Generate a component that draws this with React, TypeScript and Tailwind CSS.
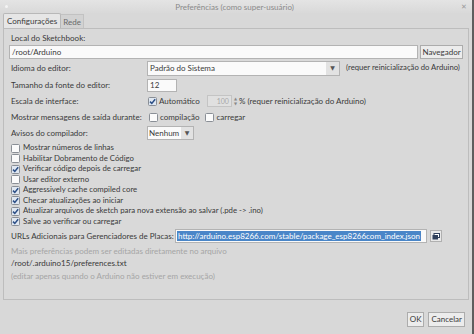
import React from 'react'

const Box = ({ checked }: { checked?: boolean }) => (
  <svg width="9" height="9" viewBox="0 0 9 9" className="shrink-0">
    <rect x="0.5" y="0.5" width="8" height="8" rx="1" fill={checked ? '#dfe7f1' : '#fbfbfb'} stroke="#8a8f96" />
    {checked && <path d="M2 4.6 L3.8 6.4 L7.2 2.2" fill="none" stroke="#2c4f86" strokeWidth="1.5" />}
  </svg>
)

const Row = ({ children, h, cls = '' }: { children: React.ReactNode; h: string; cls?: string }) => (
  <div className={`flex items-center whitespace-nowrap ${h} ${cls}`}>{children}</div>
)

const checks: [string, boolean][] = [
  ['Mostrar números de linhas', false],
  ['Habilitar Dobramento de Código', false],
  ['Verificar código depois de carregar', true],
  ['Usar editor externo', false],
  ['Aggressively cache compiled core', true],
  ['Checar atualizações ao iniciar', true],
  ['Atualizar arquivos de sketch para nova extensão ao salvar (.pde -> .ino)', true],
  ['Salve ao verificar ou carregar', true],
]

export default function App() {
  return (
    <div className="w-[474px] h-[334px] bg-[#d8d8d8] flex text-[8px] leading-none text-[#3a3a3a] overflow-hidden" style={{ fontFamily: 'Lato, "DejaVu Sans", sans-serif' }}>
      <div className="flex-1 flex flex-col">
        {/* title bar */}
        <div className="h-[13px] flex items-center justify-between px-[5px] bg-gradient-to-b from-[#e4e4e4] to-[#d9d9d9]">
          <span className="w-[3px] h-[3px] bg-[#f4f4f4] rounded-full" />
          <span className="text-[#8a8a8a]">Preferências (como super-usuário)</span>
          <span className="text-[#9a9a9a] text-[7px]">✕</span>
        </div>

        {/* tabs */}
        <div className="flex px-[3px] h-[15px] items-end">
          <div className="h-[15px] px-[3px] flex items-center bg-[#e6e6e6] border border-b-0 border-[#b8b8b8] rounded-t-[2px]">Configurações</div>
          <div className="h-[14px] px-[2px] flex items-center text-[#6a6a6a] border-r border-t border-[#c2c2c2] bg-[#d2d2d2]">Rede</div>
        </div>

        {/* panel */}
        <div className="mx-[3px] h-[272px] border border-[#bdbdbd] bg-[#d9d9d9] flex flex-col px-[5px] pt-[2px]">
          <Row h="h-[13px]" cls="pl-[2px]">Local do Sketchbook:</Row>
          <Row h="h-[15px]">
            <div className="flex-1 h-[14px] bg-[#fafafa] border border-[#b3b3b3] flex items-center px-[2px]">/root/Arduino</div>
            <div className="ml-[2px] w-[43px] h-[14px] border border-[#acacac] bg-[#ececec] flex items-center justify-center">Navegador</div>
          </Row>
          <Row h="h-[18px]" cls="pl-[2px]">
            <span className="w-[136px]">Idioma do editor:</span>
            <div className="w-[193px] h-[15px] bg-[#fafafa] border border-[#b3b3b3] flex items-center">
              <span className="flex-1 px-[2px]">Padrão do Sistema</span>
              <span className="w-[13px] h-full flex items-center justify-center bg-[#e2e2e2] text-[6px] text-[#555]">▼</span>
            </div>
            <span className="ml-[6px] text-[7.7px]">(requer reinicialização do Arduino)</span>
          </Row>
          <Row h="h-[16px]" cls="pl-[2px]">
            <span className="w-[136px]">Tamanho da fonte do editor:</span>
            <div className="w-[30px] h-[13px] bg-[#fafafa] border border-[#b3b3b3] flex items-center px-[2px]">12</div>
          </Row>
          <Row h="h-[16px]" cls="pl-[2px]">
            <span className="w-[137px]">Escala de interface:</span>
            <Box checked />
            <span className="ml-[2px]">Automático</span>
            <div className="ml-[7px] w-[25px] h-[12px] bg-[#e0e0e0] border border-[#c4c4c4] flex items-center justify-end px-[2px] text-[#a8a8a8] text-[7px]">100</div>
            <span className="ml-[2px] flex flex-col text-[4px] text-[#888] leading-[5px]"><span>▲</span><span>▼</span></span>
            <span className="ml-[2px]">% (requer reinicialização do Arduino)</span>
          </Row>
          <Row h="h-[16px]" cls="pl-[2px]">
            <span className="w-[138px]">Mostrar mensagens de saída durante:</span>
            <Box />
            <span className="ml-[2px]">compilação</span>
            <span className="ml-[6px]"><Box /></span>
            <span className="ml-[2px]">carregar</span>
          </Row>
          <Row h="h-[15px]" cls="pl-[2px]">
            <span className="w-[136px]">Avisos do compilador:</span>
            <div className="w-[47px] h-[14px] bg-[#fafafa] border border-[#b3b3b3] flex items-center">
              <span className="flex-1 px-[1px]">Nenhum</span>
              <span className="w-[12px] h-full flex items-center justify-center bg-[#e2e2e2] text-[6px] text-[#555]">▼</span>
            </div>
          </Row>
          <div className="flex flex-col pt-[3px] pl-[2px] text-[7.8px]">
            {checks.map(([t, c]) => (
              <div key={t} className="flex items-center h-[10.5px] gap-[3px] whitespace-nowrap">
                <Box checked={c} />
                <span>{t}</span>
              </div>
            ))}
          </div>
          <Row h="h-[17px]" cls="pl-[2px] pt-[1px]">
            <span className="w-[164px]">URLs Adicionais para Gerenciadores de Placas:</span>
            <div className="w-[252px] h-[14px] bg-[#fafafa] border border-[#b3b3b3] flex items-center px-[1px]">
              <span className="bg-[#4a86c8] text-white h-[10px] flex items-center px-[1px]">http://arduino.esp8266.com/stable/package_esp8266com_index.json</span>
            </div>
            <div className="ml-[3px] w-[12px] h-[12px] border border-[#b0b0b0] bg-[#e8e8e8] flex items-center justify-center">
              <svg width="8" height="7" viewBox="0 0 8 7">
                <rect x="2" y="0.5" width="5.5" height="4" fill="#fff" stroke="#2f3f5a" />
                <rect x="0.5" y="2" width="5.5" height="4.5" fill="#2f3f5a" />
              </svg>
            </div>
          </Row>
          <Row h="h-[13px]" cls="pl-[2px] pt-[1px] text-[#a5a5a5]">Mais preferências podem ser editadas diretamente no arquivo</Row>
          <Row h="h-[12px]" cls="pl-[2px]">/root/.arduino15/preferences.txt</Row>
          <Row h="h-[13px]" cls="pl-[2px] pt-[1px] text-[#a5a5a5]">(editar apenas quando o Arduino não estiver em execução)</Row>
        </div>

        {/* footer */}
        <div className="flex-1 flex justify-end items-center gap-[4px] pr-[7px] pt-[4px]">
          <div className="h-[15px] px-[2px] border border-[#acacac] bg-[#ececec] flex items-center">OK</div>
          <div className="h-[15px] px-[2px] border border-[#acacac] bg-[#ececec] flex items-center">Cancelar</div>
        </div>
      </div>
      <div className="w-[2px] bg-[#5e5e5e]" />
    </div>
  )
}
